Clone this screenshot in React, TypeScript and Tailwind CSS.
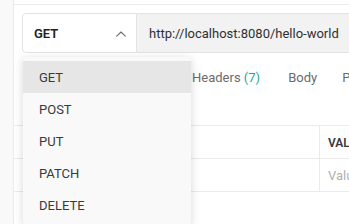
import React from 'react';

const methods = ['GET', 'POST', 'PUT', 'PATCH', 'DELETE'];
const tabs = ['Params', 'Authorization', 'Headers', 'Body', 'Pre-request Script'];

function ChevronUp() {
  return (
    <svg width="10" height="6" viewBox="0 0 10 6" fill="none">
      <path d="M0.7 5.2 5 1l4.3 4.2" stroke="#6b6b6b" strokeWidth="1.1" strokeLinecap="round" strokeLinejoin="round" />
    </svg>
  );
}

export default function App() {
  return (
    <div
      className="relative flex w-[349px] h-[224px] overflow-hidden bg-white text-[13px] text-[#212121]"
      style={{ fontFamily: 'Roboto, "Noto Sans", sans-serif' }}
    >
      {/* side strip */}
      <div className="w-[14px] shrink-0 bg-[#f9f9f9] border-r border-[#ebebeb]" />

      <div className="flex-1 flex flex-col min-w-0">
        <div className="h-[5px] shrink-0 border-b border-[#ebebeb]" />

        {/* request bar */}
        <div className="flex h-[40px] mt-[8px] ml-[8px] shrink-0">
          <div className="w-[115px] shrink-0 flex items-center justify-between pl-[11px] pr-[10px] pt-[1px] bg-white border border-[#e3e3e3] rounded-l-[4px]">
            <span className="font-semibold text-[13px] text-[#212121]">GET</span>
            <ChevronUp />
          </div>
          <div className="flex-1 flex items-center pl-[12px] pt-[1px] bg-[#f2f2f2] border-y border-[#e3e3e3] whitespace-nowrap text-[#303030]">
            http://localhost:8080/hello-world
          </div>
        </div>

        {/* tabs */}
        <div className="flex items-center h-[48px] pt-[2px] shrink-0 gap-[22px] pl-[12px] whitespace-nowrap text-[#6b6b6b]">
          {tabs.map((t) => (
            <span
              key={t}
              className={`shrink-0 ${t === 'Body' ? 'ml-[6px]' : ''} ${t === 'Pre-request Script' ? 'ml-[3px]' : ''}`}
            >
              {t}
              {t === 'Headers' && <span className="text-[#26a69a]"> (7)</span>}
            </span>
          ))}
        </div>

        {/* table */}
        <div className="mt-[24px] flex flex-col">
          <div className="flex h-[34px] border-y border-[#ebebeb]">
            <div className="w-[306px] shrink-0 border-r border-[#ebebeb]" />
            <div className="flex items-center pl-[8px] pt-[1px] font-semibold text-[12px] text-[#3a3a3a] whitespace-nowrap">VALUE</div>
          </div>
          <div className="flex h-[33px] border-b border-[#ebebeb]">
            <div className="w-[306px] shrink-0 border-r border-[#ebebeb]" />
            <div className="flex items-center pl-[8px] pt-[1px] text-[#b0b0b0] whitespace-nowrap">Value</div>
          </div>
        </div>
      </div>

      {/* method dropdown */}
      <div className="absolute left-[23px] top-[57px] w-[168px] pt-[4px] pb-[4px] bg-[#f9f9f9] rounded-[4px] shadow-[0_2px_10px_rgba(0,0,0,0.16)]">
        {methods.map((m, i) => (
          <div
            key={m}
            className={`flex items-center h-[32px] pl-[16px] pt-[1px] text-[13px] text-[#3a3a3a] ${i === 0 ? 'bg-[#e6e6e6]' : ''}`}
          >
            {m}
          </div>
        ))}
      </div>
    </div>
  );
}
